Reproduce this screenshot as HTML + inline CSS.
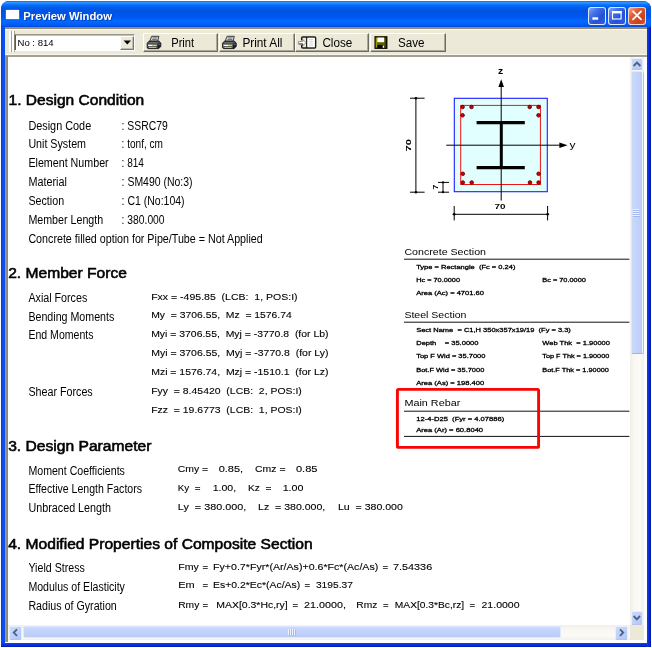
<!DOCTYPE html>
<html lang="en">
<head>
<meta charset="utf-8">
<title>Preview Window</title>
<style>
html,body{margin:0;padding:0;background:#fff;}
body{width:652px;height:648px;position:relative;overflow:hidden;font-family:"Liberation Sans",sans-serif;}
.abs{position:absolute;}
#win{left:1px;top:1px;width:650px;height:646px;border-radius:8px 8px 0 0;
 background:linear-gradient(90deg,#0a3be4 0,#0a4ff0 2px,#0a4ff0 4px,#0a4ff0 645px,#0a36dc 647px,#0520c4 649px,#0014a4 650px);}
#winb{left:1px;top:640px;width:646px;height:7px;background:linear-gradient(180deg,#0a4ff0 0,#0a45e8 3px,#0831d9 5px,#001ab4 7px);}
#title{left:1px;top:1px;width:650px;height:26px;border-radius:8px 8px 0 0;
 background:linear-gradient(180deg,#0058ee 0%,#3593ff 4%,#288eff 8%,#127dff 12%,#036ffc 16%,#0262ee 22%,#0057e5 30%,#0054e3 40%,#0055eb 56%,#005bf5 66%,#026afe 78%,#0061fc 88%,#0058f0 94%,#0048d8 100%);}
#ticon{left:6px;top:10px;width:13px;height:9px;background:#fff;box-shadow:0 0 1px #cfe0ff;}
.cb{top:6.5px;width:18px;height:18px;border-radius:3px;box-sizing:border-box;border:1px solid rgba(255,255,255,.85);
 background:linear-gradient(135deg,#86a8f8 0%,#4472ea 30%,#2450d6 65%,#2f60e8 100%);}
#bclose{background:linear-gradient(135deg,#f2a88e 0%,#e25a34 35%,#cc4018 75%,#dc5a32 100%);border-color:rgba(255,236,230,.85);}
#toolbar{left:5px;top:27px;width:642px;height:30px;background:#ece9d8;
 border-top:2px solid #918d78;border-bottom:2px solid #a3a092;box-sizing:border-box;
 box-shadow:inset 0 1px 0 #fbfaf2, inset 0 -1px 0 #f8f7ef;}
.btn{top:33px;height:19px;box-sizing:border-box;background:#ece9d8;border-top:1px solid #fff;border-left:1px solid #fff;
 border-right:1px solid #6e6c60;border-bottom:1px solid #6e6c60;box-shadow:inset -1px -1px 0 #aca899;}
#combo{left:14px;top:34px;width:121px;height:17px;box-sizing:border-box;background:#fff;
 border-top:1px solid #9b9888;border-left:1px solid #85836f;border-right:1px solid #fff;border-bottom:1px solid #fff;
 box-shadow:inset 1px 0 0 #5c5a4e, inset 0 1px 0 #c2bfae;}
#cbtn{left:120px;top:36px;width:14px;height:14px;box-sizing:border-box;background:#ece9d8;
 border-top:1px solid #fff;border-left:1px solid #fff;border-right:1px solid #7a786a;border-bottom:1px solid #7a786a;box-shadow:inset -1px -1px 0 #c0bdac;}
.grip{top:31px;width:2px;height:21px;background:#fff;border-right:1px solid #a6a392;box-sizing:content-box;}
#view{left:5px;top:56px;width:642px;height:587px;background:#fff;}
#vleft{left:5px;top:56px;width:3px;height:586px;background:linear-gradient(90deg,#a9a28e,#8e8978 60%,#8a8577);}
#vsb{left:630px;top:57px;width:14px;height:568px;background:linear-gradient(90deg,#f1efe6,#f8f7f2 30%,#fbfaf6 70%,#f3f1ea);}
#hsb{left:8px;top:625px;width:622px;height:15px;background:linear-gradient(180deg,#f1efe6,#f8f7f2 30%,#fbfaf6 70%,#f3f1ea);}
#corner{left:630px;top:625px;width:14px;height:15px;background:#ece9d8;}
.sbtn{box-sizing:border-box;border:1px solid #e8eefc;border-bottom-color:#b4c3ea;border-radius:2px;background:linear-gradient(135deg,#cbdafd,#bccffa 60%,#b3c7f6);}
.thumb{box-sizing:border-box;border:1px solid #dfe8fd;border-radius:2px;}
#vthumb{left:631px;top:71px;width:13px;height:283px;border-right:none;background:linear-gradient(90deg,#cad8fd 0,#c1d2fb 50%,#bacbf8 80%,#f2f5ff 86%,#f6f8ff 92%,#aebfe8 94%,#aebfe8 100%);border-bottom-color:#9eb3e6;}
#hthumb{left:23px;top:626px;width:538px;height:12px;background:linear-gradient(180deg,#cad8fd,#c1d2fb 50%,#b9cbf7);}
svg{position:absolute;left:0;top:0;will-change:transform;}
text{font-family:"Liberation Sans",sans-serif;}
text.h{stroke:#000;stroke-width:.55px;}
text.p{stroke:#000;stroke-width:.3px;}
text.f{stroke:#000;stroke-width:.1px;}
</style>
</head>
<body>
<div id="win" class="abs"></div>
<div id="winb" class="abs"></div>
<div id="title" class="abs"></div>
<div id="ticon" class="abs"></div>
<div class="abs cb" style="left:587.5px"></div>
<div class="abs cb" style="left:607.5px"></div>
<div class="abs cb" id="bclose" style="left:627.5px"></div>

<div id="view" class="abs"></div>
<div id="toolbar" class="abs"></div>
<div class="abs grip" style="left:9px"></div>
<div class="abs grip" style="left:12px"></div>
<div id="combo" class="abs"></div>
<div id="cbtn" class="abs"></div>
<div class="abs btn" style="left:143px;width:75px"></div>
<div class="abs btn" style="left:219px;width:76px"></div>
<div class="abs btn" style="left:295px;width:74px"></div>
<div class="abs btn" style="left:370px;width:76px"></div>

<div id="vleft" class="abs"></div>
<div id="vsb" class="abs"></div>
<div id="hsb" class="abs"></div>
<div id="corner" class="abs"></div>
<div class="abs sbtn" style="left:631px;top:58px;width:12px;height:12px"></div>
<div class="abs sbtn" style="left:631px;top:611px;width:12px;height:14px"></div>
<div class="abs sbtn" style="left:9px;top:626px;width:13px;height:14px"></div>
<div class="abs sbtn" style="left:615px;top:626px;width:13px;height:14px"></div>
<div id="vthumb" class="abs thumb"></div>
<div id="hthumb" class="abs thumb"></div>

<svg width="652" height="648" viewBox="0 0 652 648">
<!-- caption buttons glyphs -->
<rect x="592.4" y="17.3" width="5.8" height="2.4" fill="#fff"/>
<rect x="612.5" y="11.6" width="8.6" height="7.4" fill="none" stroke="#fff" stroke-width="1.1"/>
<rect x="612" y="11" width="9.6" height="2.4" fill="#fff"/>
<path d="M633 11.4 L641 19.4 M641 11.4 L633 19.4" stroke="#fff" stroke-width="1.8" stroke-linecap="round"/>
<!-- combo arrow -->
<path d="M123.6 40.6 L131 40.6 L127.3 44.4 Z" fill="#000"/>
<!-- scroll arrows -->
<g fill="none" stroke="#4d6185" stroke-width="1.9">
<path d="M633.6 66 L637 62.6 L640.4 66"/>
<path d="M633.6 616 L636.8 619.3 L640 616"/>
<path d="M17 629.4 L13.8 632.6 L17 635.8"/>
<path d="M620 629.4 L623.2 632.6 L620 635.8"/>
</g>
<!-- thumb grips -->
<g stroke="#eef3ff" stroke-width="1">
<path d="M632.5 209.5h7M632.5 211.5h7M632.5 213.5h7M632.5 215.5h7"/>
<path d="M288.5 629v6M290.5 629v6M292.5 629v6M294.5 629v6"/>
</g>
<g stroke="#9db2e8" stroke-width="1" opacity="0.8">
<path d="M633 210.5h7M633 212.5h7M633 214.5h7M633 216.5h7"/>
<path d="M289.5 629.5v6M291.5 629.5v6M293.5 629.5v6M295.5 629.5v6"/>
</g>

<!-- toolbar icons -->
<g>
 <path d="M151.7 36.3 L158.9 36.3 L157.7 41.2 L149.7 41.2 Z" fill="#d4d7de" stroke="#2a2a2a" stroke-width="0.9"/>
 <path d="M152.6 37.9h4.6M152.2 39.5h4.6" stroke="#5a6390" stroke-width="0.9"/>
 <path d="M147.2 43.2 L149 41.2 L159.2 41.2 L160.8 43.2 L160.8 46.6 L158.6 48.6 L148 48.6 L147.2 47.8 Z" fill="#555" stroke="#111" stroke-width="0.9"/>
 <path d="M157.6 43.4 L160.4 43.4 L160.4 46.4 L158.4 48.2 L157.6 48.2 Z" fill="#1c1c1c"/>
 <path d="M158 44.6 L160.2 44.6" stroke="#6a70c8" stroke-width="0.7"/>
 <path d="M149.4 42.6h8" stroke="#777" stroke-width="0.7"/>
 <rect x="148.1" y="44.7" width="4.5" height="1.3" fill="#fff"/>
 <rect x="152.6" y="44.7" width="4.2" height="1.3" fill="#d6e600"/>
 <rect x="149" y="46.9" width="7.2" height="0.9" fill="#cfcfcf"/>
</g>
<g transform="translate(75.4 0)">
 <path d="M151.7 36.3 L158.9 36.3 L157.7 41.2 L149.7 41.2 Z" fill="#d4d7de" stroke="#2a2a2a" stroke-width="0.9"/>
 <path d="M152.6 37.9h4.6M152.2 39.5h4.6" stroke="#5a6390" stroke-width="0.9"/>
 <path d="M147.2 43.2 L149 41.2 L159.2 41.2 L160.8 43.2 L160.8 46.6 L158.6 48.6 L148 48.6 L147.2 47.8 Z" fill="#555" stroke="#111" stroke-width="0.9"/>
 <path d="M157.6 43.4 L160.4 43.4 L160.4 46.4 L158.4 48.2 L157.6 48.2 Z" fill="#1c1c1c"/>
 <path d="M158 44.6 L160.2 44.6" stroke="#6a70c8" stroke-width="0.7"/>
 <path d="M149.4 42.6h8" stroke="#777" stroke-width="0.7"/>
 <rect x="148.1" y="44.7" width="4.5" height="1.3" fill="#fff"/>
 <rect x="152.6" y="44.7" width="4.2" height="1.3" fill="#d6e600"/>
 <rect x="149" y="46.9" width="7.2" height="0.9" fill="#cfcfcf"/>
</g>
<g>
 <rect x="301.7" y="37" width="13.9" height="11" rx="1" fill="#ece9d8" stroke="#1c1c1c" stroke-width="1.5"/>
 <path d="M306.7 37v11" stroke="#1c1c1c" stroke-width="1.3"/>
 <rect x="307.5" y="37.9" width="7.3" height="9.2" fill="#fdfdfd"/>
 <path d="M309 39.6h4M309.4 41.4h3.4M309.4 43.2h3.4M309 45.2h4" stroke="#c4c4c8" stroke-width="0.7"/>
 <rect x="300.6" y="40.4" width="2.4" height="4.6" fill="#ece9d8"/>
 <path d="M298.4 41.5 L302.8 41.5 L302.8 39.7 L306.2 42.6 L302.8 45.5 L302.8 43.7 L298.4 43.7 Z" fill="#fff" stroke="#444" stroke-width="0.5"/>
 <path d="M298.6 44.1 L302.6 44.1 L302.6 45.6" stroke="#333" stroke-width="0.8" fill="none"/>
</g>
<g>
 <rect x="375.2" y="36.9" width="11.5" height="11.3" fill="#5c5c00" stroke="#0c0c00" stroke-width="1.5"/>
 <rect x="375.7" y="37.6" width="1.5" height="10" fill="#9c9c00"/>
 <rect x="377.3" y="37.5" width="6.9" height="4.7" fill="#fff"/>
 <rect x="377.3" y="45" width="7.1" height="3" fill="#080808"/>
 <rect x="382.7" y="45.5" width="1.5" height="2.3" fill="#f4f4f4"/>
 <path d="M385.4 37.6v10" stroke="#3c3c00" stroke-width="1"/>
</g>

<!-- section diagram -->
<rect x="454.3" y="98.3" width="93" height="93.4" fill="#e2ffff" stroke="#1e1eff" stroke-width="1.1"/>
<rect x="460.7" y="105.4" width="79.7" height="79.1" fill="none" stroke="#f01414" stroke-width="1"/>
<g fill="#cc0000" stroke="#4a0000" stroke-width="0.8">
<circle cx="462.6" cy="107" r="1.8"/><circle cx="471.5" cy="107" r="1.8"/><circle cx="462.6" cy="115.3" r="1.8"/>
<circle cx="538.5" cy="107" r="1.8"/><circle cx="529.7" cy="107" r="1.8"/><circle cx="538.5" cy="115.3" r="1.8"/>
<circle cx="462.8" cy="182.5" r="1.8"/><circle cx="471.7" cy="182.5" r="1.8"/><circle cx="462.8" cy="173.8" r="1.8"/>
<circle cx="538.6" cy="182.5" r="1.8"/><circle cx="530" cy="182.5" r="1.8"/><circle cx="538.6" cy="173.8" r="1.8"/>
</g>
<g stroke="#000" fill="none">
<path d="M501.2 86 V200.6" stroke-width="1"/>
<path d="M446.3 145.2 H560" stroke-width="1"/>
<path d="M476.6 122.6 H524.8 M476.6 167.7 H524.8" stroke-width="3.2"/>
<path d="M501.3 122.6 V167.7" stroke-width="3"/>
<!-- left dim -->
<path d="M415.9 98.2 V192.2 M410 98.2 H424.6 M410 192.2 H424.6" stroke-width="1"/>
<!-- small dim -->
<path d="M443 182.4 V192.2 M438 182.4 H449 M438 192.2 H449" stroke-width="1"/>
<!-- bottom dim -->
<path d="M452.6 214.3 H549.2 M454.2 206 V220.4 M547.6 206 V220.4" stroke-width="1"/>
</g>
<g fill="#000">
<path d="M501.2 79.2 L504 87 L498.4 87 Z"/>
<path d="M567.6 145.2 L559.4 148 L559.4 142.4 Z"/>
<circle cx="415.9" cy="98.2" r="1.3"/><circle cx="415.9" cy="192.2" r="1.3"/>
<circle cx="443" cy="182.4" r="1.1"/><circle cx="443" cy="192.2" r="1.1"/>
<circle cx="454.2" cy="214.3" r="1.3"/><circle cx="547.6" cy="214.3" r="1.3"/>
</g>

<!-- right panel rules -->
<g stroke="#111" stroke-width="1">
<path d="M404 259.2 H629.4"/>
<path d="M404 322.2 H629.4"/>
<path d="M404 411.2 H629.4"/>
<path d="M404 436.4 H629.4"/>
</g>
<rect x="397.4" y="389.4" width="141.2" height="58" rx="1.2" fill="none" stroke="#fa0404" stroke-width="2.9"/>

<text x="23.3" y="19.6" font-size="11.2" textLength="88.6" lengthAdjust="spacingAndGlyphs" font-weight="bold" fill="#0a2a8a" opacity="0.55" transform="translate(1,1)">Preview Window</text>
<text x="23.3" y="19.6" font-size="11.2" textLength="88.6" lengthAdjust="spacingAndGlyphs" font-weight="bold" fill="#fff">Preview Window</text>
<text x="17.5" y="46.0" font-size="9.5" textLength="36.1" lengthAdjust="spacingAndGlyphs">No : 814</text>
<text x="171.2" y="46.6" font-size="12" textLength="23.0" lengthAdjust="spacingAndGlyphs">Print</text>
<text x="242.4" y="46.6" font-size="12" textLength="40.0" lengthAdjust="spacingAndGlyphs">Print All</text>
<text x="322.4" y="46.6" font-size="12" textLength="29.9" lengthAdjust="spacingAndGlyphs">Close</text>
<text x="398.0" y="46.6" font-size="12" textLength="26.6" lengthAdjust="spacingAndGlyphs">Save</text>
<text x="8.6" y="104.6" font-size="14" textLength="135.6" lengthAdjust="spacingAndGlyphs" class="h">1. Design Condition</text>
<text x="8.2" y="277.6" font-size="14" textLength="118.7" lengthAdjust="spacingAndGlyphs" class="h">2. Member Force</text>
<text x="8.2" y="450.7" font-size="14" textLength="143.2" lengthAdjust="spacingAndGlyphs" class="h">3. Design Parameter</text>
<text x="8.2" y="549.0" font-size="14" textLength="304.4" lengthAdjust="spacingAndGlyphs" class="h">4. Modified Properties of Composite Section</text>
<text x="28.4" y="129.5" font-size="12" textLength="62.8" lengthAdjust="spacingAndGlyphs">Design Code</text>
<text x="121.6" y="129.5" font-size="12" textLength="46.2" lengthAdjust="spacingAndGlyphs">: SSRC79</text>
<text x="28.4" y="148.3" font-size="12" textLength="57.6" lengthAdjust="spacingAndGlyphs">Unit System</text>
<text x="121.6" y="148.3" font-size="12" textLength="41.4" lengthAdjust="spacingAndGlyphs">: tonf, cm</text>
<text x="28.4" y="167.1" font-size="12" textLength="80.3" lengthAdjust="spacingAndGlyphs">Element Number</text>
<text x="121.6" y="167.1" font-size="12" textLength="22.3" lengthAdjust="spacingAndGlyphs">: 814</text>
<text x="28.4" y="185.9" font-size="12" textLength="38.4" lengthAdjust="spacingAndGlyphs">Material</text>
<text x="121.6" y="185.9" font-size="12" textLength="71.0" lengthAdjust="spacingAndGlyphs">: SM490 (No:3)</text>
<text x="28.4" y="204.7" font-size="12" textLength="35.7" lengthAdjust="spacingAndGlyphs">Section</text>
<text x="121.6" y="204.7" font-size="12" textLength="63.0" lengthAdjust="spacingAndGlyphs">: C1 (No:104)</text>
<text x="28.4" y="223.5" font-size="12" textLength="74.8" lengthAdjust="spacingAndGlyphs">Member Length</text>
<text x="121.6" y="223.5" font-size="12" textLength="43.0" lengthAdjust="spacingAndGlyphs">: 380.000</text>
<text x="28.4" y="243.0" font-size="12" textLength="234.3" lengthAdjust="spacingAndGlyphs">Concrete filled option for Pipe/Tube = Not Applied</text>
<text x="28.4" y="302.1" font-size="12" textLength="58.9" lengthAdjust="spacingAndGlyphs">Axial Forces</text>
<text x="28.4" y="320.6" font-size="12" textLength="85.9" lengthAdjust="spacingAndGlyphs">Bending Moments</text>
<text x="28.4" y="339.0" font-size="12" textLength="65.1" lengthAdjust="spacingAndGlyphs">End Moments</text>
<text x="28.4" y="395.5" font-size="12" textLength="64.3" lengthAdjust="spacingAndGlyphs">Shear Forces</text>
<text x="28.4" y="474.6" font-size="12" textLength="96.5" lengthAdjust="spacingAndGlyphs">Moment Coefficients</text>
<text x="28.4" y="493.4" font-size="12" textLength="113.6" lengthAdjust="spacingAndGlyphs">Effective Length Factors</text>
<text x="28.4" y="512.0" font-size="12" textLength="82.7" lengthAdjust="spacingAndGlyphs">Unbraced Length</text>
<text x="28.4" y="571.7" font-size="12" textLength="56.5" lengthAdjust="spacingAndGlyphs">Yield Stress</text>
<text x="28.4" y="590.8" font-size="12" textLength="96.5" lengthAdjust="spacingAndGlyphs">Modulus of Elasticity</text>
<text x="28.4" y="609.8" font-size="12" textLength="88.4" lengthAdjust="spacingAndGlyphs">Radius of Gyration</text>
<text x="151.2" y="300.0" font-size="9" textLength="146.4" lengthAdjust="spacingAndGlyphs" class="f" xml:space="preserve">Fxx = -495.85  (LCB:  1, POS:I)</text>
<text x="151.2" y="318.0" font-size="9" textLength="140.6" lengthAdjust="spacingAndGlyphs" class="f" xml:space="preserve">My  = 3706.55,  Mz  = 1576.74</text>
<text x="151.2" y="337.0" font-size="9" textLength="177.3" lengthAdjust="spacingAndGlyphs" class="f" xml:space="preserve">Myi = 3706.55,  Myj = -3770.8  (for Lb)</text>
<text x="151.2" y="356.0" font-size="9" textLength="177.3" lengthAdjust="spacingAndGlyphs" class="f" xml:space="preserve">Myi = 3706.55,  Myj = -3770.8  (for Ly)</text>
<text x="151.2" y="375.0" font-size="9" textLength="177.3" lengthAdjust="spacingAndGlyphs" class="f" xml:space="preserve">Mzi = 1576.74,  Mzj = -1510.1  (for Lz)</text>
<text x="151.2" y="394.0" font-size="9" textLength="150.6" lengthAdjust="spacingAndGlyphs" class="f" xml:space="preserve">Fyy  = 8.45420  (LCB:  2, POS:I)</text>
<text x="151.2" y="413.0" font-size="9" textLength="150.6" lengthAdjust="spacingAndGlyphs" class="f" xml:space="preserve">Fzz  = 19.6773  (LCB:  1, POS:I)</text>
<text x="177.8" y="472.0" font-size="9" textLength="30.4" lengthAdjust="spacingAndGlyphs" class="f">Cmy =</text>
<text x="218.7" y="472.0" font-size="9" textLength="24.5" lengthAdjust="spacingAndGlyphs" class="f">0.85,</text>
<text x="255.1" y="472.0" font-size="9" textLength="30.4" lengthAdjust="spacingAndGlyphs" class="f">Cmz =</text>
<text x="295.9" y="472.0" font-size="9" textLength="21.6" lengthAdjust="spacingAndGlyphs" class="f">0.85</text>
<text x="177.8" y="491.0" font-size="9" textLength="22.7" lengthAdjust="spacingAndGlyphs" class="f" xml:space="preserve">Ky  =</text>
<text x="212.7" y="491.0" font-size="9" textLength="23.5" lengthAdjust="spacingAndGlyphs" class="f">1.00,</text>
<text x="248.1" y="491.0" font-size="9" textLength="23.4" lengthAdjust="spacingAndGlyphs" class="f" xml:space="preserve">Kz  =</text>
<text x="282.7" y="491.0" font-size="9" textLength="20.8" lengthAdjust="spacingAndGlyphs" class="f">1.00</text>
<text x="177.8" y="510.0" font-size="9" textLength="68.4" lengthAdjust="spacingAndGlyphs" class="f" xml:space="preserve">Ly  = 380.000,</text>
<text x="258.0" y="510.0" font-size="9" textLength="67.3" lengthAdjust="spacingAndGlyphs" class="f" xml:space="preserve">Lz  = 380.000,</text>
<text x="337.9" y="510.0" font-size="9" textLength="65.0" lengthAdjust="spacingAndGlyphs" class="f" xml:space="preserve">Lu  = 380.000</text>
<text x="178.2" y="570.0" font-size="9" textLength="20.6" lengthAdjust="spacingAndGlyphs" class="f">Fmy</text>
<text x="202.4" y="570.0" font-size="9" textLength="5.6" lengthAdjust="spacingAndGlyphs" class="f">=</text>
<text x="213.0" y="570.0" font-size="9" textLength="165.3" lengthAdjust="spacingAndGlyphs" class="f">Fy+0.7*Fyr*(Ar/As)+0.6*Fc*(Ac/As)</text>
<text x="382.5" y="570.0" font-size="9" textLength="5.6" lengthAdjust="spacingAndGlyphs" class="f">=</text>
<text x="392.9" y="570.0" font-size="9" textLength="39.3" lengthAdjust="spacingAndGlyphs" class="f">7.54336</text>
<text x="178.2" y="588.0" font-size="9" textLength="16.4" lengthAdjust="spacingAndGlyphs" class="f">Em</text>
<text x="202.4" y="588.0" font-size="9" textLength="5.6" lengthAdjust="spacingAndGlyphs" class="f">=</text>
<text x="213.0" y="588.0" font-size="9" textLength="87.2" lengthAdjust="spacingAndGlyphs" class="f">Es+0.2*Ec*(Ac/As)</text>
<text x="304.6" y="588.0" font-size="9" textLength="5.6" lengthAdjust="spacingAndGlyphs" class="f">=</text>
<text x="315.9" y="588.0" font-size="9" textLength="37.0" lengthAdjust="spacingAndGlyphs" class="f">3195.37</text>
<text x="178.2" y="608.0" font-size="9" textLength="21.1" lengthAdjust="spacingAndGlyphs" class="f">Rmy</text>
<text x="202.4" y="608.0" font-size="9" textLength="5.6" lengthAdjust="spacingAndGlyphs" class="f">=</text>
<text x="216.3" y="608.0" font-size="9" textLength="71.4" lengthAdjust="spacingAndGlyphs" class="f">MAX[0.3*Hc,ry]</text>
<text x="292.4" y="608.0" font-size="9" textLength="5.6" lengthAdjust="spacingAndGlyphs" class="f">=</text>
<text x="304.1" y="608.0" font-size="9" textLength="41.9" lengthAdjust="spacingAndGlyphs" class="f">21.0000,</text>
<text x="356.3" y="608.0" font-size="9" textLength="21.0" lengthAdjust="spacingAndGlyphs" class="f">Rmz</text>
<text x="383.0" y="608.0" font-size="9" textLength="5.6" lengthAdjust="spacingAndGlyphs" class="f">=</text>
<text x="394.8" y="608.0" font-size="9" textLength="69.4" lengthAdjust="spacingAndGlyphs" class="f">MAX[0.3*Bc,rz]</text>
<text x="469.6" y="608.0" font-size="9" textLength="5.6" lengthAdjust="spacingAndGlyphs" class="f">=</text>
<text x="481.5" y="608.0" font-size="9" textLength="38.1" lengthAdjust="spacingAndGlyphs" class="f">21.0000</text>
<text x="404.4" y="254.7" font-size="9.01" textLength="81.6" lengthAdjust="spacingAndGlyphs">Concrete Section</text>
<text x="404.4" y="318.0" font-size="9.01" textLength="62.1" lengthAdjust="spacingAndGlyphs">Steel Section</text>
<text x="404.4" y="406.3" font-size="9.01" textLength="55.9" lengthAdjust="spacingAndGlyphs">Main Rebar</text>
<text x="416.2" y="269.4" font-size="6.2" textLength="99.2" lengthAdjust="spacingAndGlyphs" class="p" xml:space="preserve">Type = Rectangle  (Fc = 0.24)</text>
<text x="416.2" y="282.2" font-size="6.2" textLength="43.8" lengthAdjust="spacingAndGlyphs" class="p">Hc = 70.0000</text>
<text x="542.3" y="282.2" font-size="6.2" textLength="43.6" lengthAdjust="spacingAndGlyphs" class="p">Bc = 70.0000</text>
<text x="416.2" y="295.2" font-size="6.2" textLength="67.8" lengthAdjust="spacingAndGlyphs" class="p">Area (Ac) = 4701.60</text>
<text x="416.2" y="332.0" font-size="6.2" textLength="154.7" lengthAdjust="spacingAndGlyphs" class="p" xml:space="preserve">Sect Name  = C1,H 350x357x19/19  (Fy = 3.3)</text>
<text x="416.2" y="344.9" font-size="6.2" textLength="62.3" lengthAdjust="spacingAndGlyphs" class="p" xml:space="preserve">Depth    = 35.0000</text>
<text x="542.3" y="344.9" font-size="6.2" textLength="67.7" lengthAdjust="spacingAndGlyphs" class="p" xml:space="preserve">Web Thk  = 1.90000</text>
<text x="416.2" y="357.7" font-size="6.2" textLength="69.2" lengthAdjust="spacingAndGlyphs" class="p">Top F Wid = 35.7000</text>
<text x="542.3" y="357.7" font-size="6.2" textLength="67.0" lengthAdjust="spacingAndGlyphs" class="p">Top F Thk = 1.90000</text>
<text x="416.2" y="371.5" font-size="6.2" textLength="68.1" lengthAdjust="spacingAndGlyphs" class="p">Bot.F Wid = 35.7000</text>
<text x="542.3" y="371.5" font-size="6.2" textLength="66.6" lengthAdjust="spacingAndGlyphs" class="p">Bot.F Thk = 1.90000</text>
<text x="416.2" y="385.0" font-size="6.2" textLength="68.1" lengthAdjust="spacingAndGlyphs" class="p">Area (As) = 198.400</text>
<text x="416.2" y="421.0" font-size="6.2" textLength="88.1" lengthAdjust="spacingAndGlyphs" class="p" xml:space="preserve">12-4-D25  (Fyr = 4.07886)</text>
<text x="416.2" y="431.5" font-size="6.2" textLength="66.9" lengthAdjust="spacingAndGlyphs" class="p">Area (Ar) = 60.8040</text>
<text x="498.0" y="74.4" font-size="8.5" textLength="5.2" lengthAdjust="spacingAndGlyphs" font-weight="bold">z</text>
<text x="569.4" y="147.6" font-size="9.5" textLength="6.0" lengthAdjust="spacingAndGlyphs">y</text>
<text x="494.6" y="209.0" font-size="7.2" textLength="11.0" lengthAdjust="spacingAndGlyphs" font-weight="bold">70</text>
<text x="-6.2" y="2.8" font-size="7.2" textLength="12.4" lengthAdjust="spacingAndGlyphs" font-weight="bold" transform="translate(407.8 145.2) rotate(-90)">70</text>
<text x="-2.4" y="2.4" font-size="7" textLength="4.8" lengthAdjust="spacingAndGlyphs" font-weight="bold" transform="translate(435.4 187.2) rotate(-90)">7</text>
</svg>
</body>
</html>
